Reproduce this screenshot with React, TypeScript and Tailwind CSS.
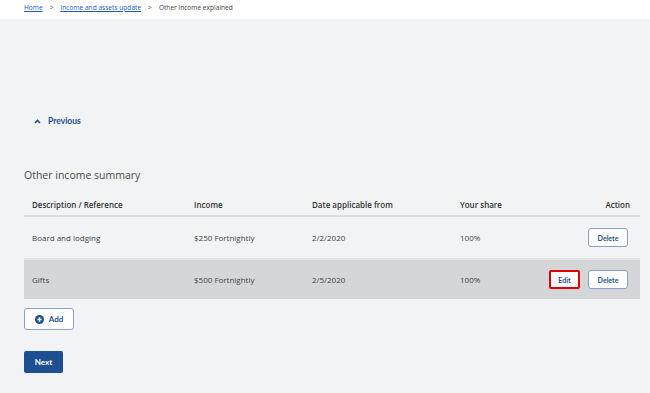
import React from "react"

const rows = [
  { desc: "Board and lodging", income: "$250 Fortnightly", date: "2/2/2020", share: "100%", edit: false },
  { desc: "Gifts", income: "$500 Fortnightly", date: "2/5/2020", share: "100%", edit: true },
]

function SmallButton({ label, highlight }: { label: string; highlight?: boolean }) {
  return (
    <button
      className={
        highlight
          ? "h-[19px] w-[31px] bg-white border-2 border-[#e00000] rounded-[2px] text-[7px] font-bold text-[#1d4f91]"
          : "h-[19px] w-[40px] bg-white border border-[#8aa2c6] rounded-[3px] text-[7px] font-bold text-[#1d4f91]"
      }
      style={{ fontFamily: "Lato, sans-serif" }}
    >
      {label}
    </button>
  )
}

export default function App() {
  return (
    <div className="w-[650px] h-[393px] bg-[#f2f3f5] overflow-hidden" style={{ fontFamily: "'Open Sans', sans-serif" }}>
      <div className="h-[19px] bg-white flex items-center pl-[24px] pb-[4px] text-[6.6px] text-[#444] gap-[7px]">
        <a className="text-[#1d5bbf] underline">Home</a>
        <span>&gt;</span>
        <a className="text-[#1d5bbf] underline">Income and assets update</a>
        <span>&gt;</span>
        <span>Other income explained</span>
      </div>

      <div className="pl-[34px] pt-[96px] flex items-center gap-[7px] text-[#1d4f91]" style={{ fontFamily: "Lato, sans-serif" }}>
        <svg width="7" height="5" viewBox="0 0 7 5">
          <path d="M1 4 L3.5 1.5 L6 4" stroke="#1d4f91" strokeWidth="1.6" fill="none" />
        </svg>
        <span className="text-[8.5px] font-bold">Previous</span>
      </div>

      <div className="px-[24px] pt-[42px]">
        <h2 className="text-[10.5px] text-[#4b4b4b] leading-none">Other income summary</h2>

        <div className="mt-[14px] w-[616px] text-[8px] text-[#444]">
          <div className="grid grid-cols-[162px_118px_148px_1fr_80px] h-[23px] items-center pl-[8px] pr-[10px] border-b-2 border-[#dcdddf] font-semibold text-[#333]">
            <span>Description / Reference</span>
            <span>Income</span>
            <span>Date applicable from</span>
            <span>Your share</span>
            <span className="text-right">Action</span>
          </div>
          {rows.map((r) => (
            <div
              key={r.desc}
              className={
                "grid grid-cols-[162px_118px_148px_1fr_80px] h-[41px] items-center pl-[8px] pr-[12px] " +
                (r.edit ? "bg-[#d5d6d8] border-t-2 border-[#e3e4e6]" : "")
              }
            >
              <span>{r.desc}</span>
              <span>{r.income}</span>
              <span>{r.date}</span>
              <span>{r.share}</span>
              <div className="flex justify-end gap-[8px]">
                {r.edit && <SmallButton label="Edit" highlight />}
                <SmallButton label="Delete" />
              </div>
            </div>
          ))}
        </div>

        <button
          className="mt-[9px] h-[22px] w-[50px] bg-white border border-[#8aa2c6] rounded-[3px] flex items-center justify-center gap-[5px] text-[8px] font-bold text-[#1d4f91]"
          style={{ fontFamily: "Lato, sans-serif" }}
        >
          <svg width="9" height="9" viewBox="0 0 10 10">
            <circle cx="5" cy="5" r="5" fill="#1d4f91" />
            <path d="M5 2.6 V7.4 M2.6 5 H7.4" stroke="white" strokeWidth="1.6" />
          </svg>
          Add
        </button>

        <button
          className="mt-[21px] h-[22px] w-[39px] bg-[#1d4f91] rounded-[2px] text-white text-[8px] font-bold"
          style={{ fontFamily: "Lato, sans-serif" }}
        >
          Next
        </button>
      </div>
    </div>
  )
}
